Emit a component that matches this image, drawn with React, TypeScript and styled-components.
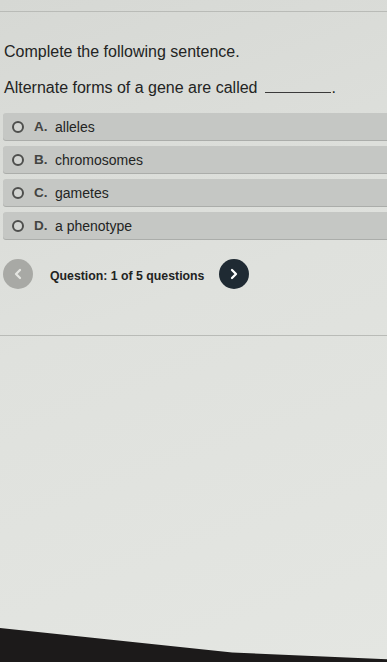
import React from 'react'
import styled, { createGlobalStyle } from 'styled-components'
import { ChevronLeft, ChevronRight } from 'lucide-react'

const GlobalStyle = createGlobalStyle`
  html, body {
    margin: 0;
    padding: 0;
  }
  body {
    font-family: 'Liberation Sans', Arial, sans-serif;
    color: #232423;
    background: #dcdedb;
  }
`

const Screen = styled.div`
  height: 100vh;
  display: flex;
  flex-direction: column;
  overflow: hidden;
  background: linear-gradient(160deg, #d6d8d4 0%, #dfe1dd 45%, #e4e6e2 100%);
`

const Rule = styled.div<{ top: number }>`
  margin-top: ${({ top }) => top}px;
  height: 1px;
  background: #b9bbb7;
  flex-shrink: 0;
`

const Content = styled.div`
  flex: 1;
  display: flex;
  flex-direction: column;
`

const Prompt = styled.p`
  margin: 30px 0 0;
  padding-left: 4px;
  font-size: 16px;
  line-height: 20px;
`

const Sentence = styled.p`
  margin: 15px 0 0;
  padding-left: 4px;
  font-size: 16px;
  line-height: 20px;
`

const Blank = styled.span`
  display: inline-block;
  width: 66px;
  margin-left: 8px;
  border-bottom: 1px solid #3a3a3a;
  height: 15px;
  vertical-align: baseline;
`

const Options = styled.div`
  margin: 15px 0 0 3px;
  display: flex;
  flex-direction: column;
  gap: 6px;
`

const Option = styled.label`
  height: 27px;
  display: flex;
  align-items: center;
  background: #c5c7c4;
  border-radius: 3px 0 0 3px;
  box-shadow: 0 1px 0 #abadaa;
  padding-left: 9px;
  font-size: 14px;
  cursor: pointer;
`

const Radio = styled.span`
  width: 8px;
  height: 8px;
  border: 2px solid #4e4f4d;
  border-radius: 50%;
  background: #d3d5d2;
  margin-right: 10px;
  flex-shrink: 0;
`

const Letter = styled.span`
  font-weight: 700;
  font-size: 13.5px;
  color: #434442;
  width: 21px;
`

const Nav = styled.div`
  margin: 20px 0 0 3px;
  display: flex;
  align-items: center;
  height: 30px;
`

const RoundButton = styled.button<{ dark?: boolean }>`
  width: 30px;
  height: 30px;
  border-radius: 50%;
  border: none;
  padding: 0;
  display: flex;
  align-items: center;
  justify-content: center;
  background: ${({ dark }) => (dark ? '#1f2a33' : '#a8a9a5')};
  color: ${({ dark }) => (dark ? '#ffffff' : '#e4e5e1')};
  flex-shrink: 0;
  cursor: pointer;
`

const Counter = styled.span`
  font-size: 12.3px;
  font-weight: 700;
  margin: 4px 15px 0 17px;
  color: #222322;
`

const Bezel = styled.div`
  height: 34px;
  flex-shrink: 0;
  background: #1c1a1a;
  clip-path: polygon(0 0, 60% 72%, 100% 92%, 100% 100%, 0 100%);
`

const options = [
  { letter: 'A.', text: 'alleles' },
  { letter: 'B.', text: 'chromosomes' },
  { letter: 'C.', text: 'gametes' },
  { letter: 'D.', text: 'a phenotype' },
]

export default function App() {
  return (
    <Screen>
      <GlobalStyle />
      <Rule top={11} />
      <Content>
        <Prompt>Complete the following sentence.</Prompt>
        <Sentence>
          Alternate forms of a gene are called<Blank />.
        </Sentence>
        <Options>
          {options.map((o) => (
            <Option key={o.letter}>
              <Radio />
              <Letter>{o.letter}</Letter>
              {o.text}
            </Option>
          ))}
        </Options>
        <Nav>
          <RoundButton aria-label="Previous question">
            <ChevronLeft size={16} strokeWidth={3.4} />
          </RoundButton>
          <Counter>Question: 1 of 5 questions</Counter>
          <RoundButton dark aria-label="Next question">
            <ChevronRight size={16} strokeWidth={3.4} />
          </RoundButton>
        </Nav>
        <Rule top={46} />
      </Content>
      <Bezel />
    </Screen>
  )
}
